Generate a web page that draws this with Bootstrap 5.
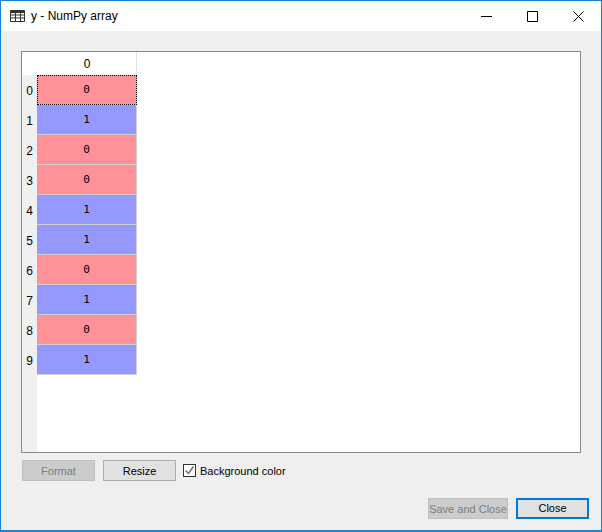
<!DOCTYPE html>
<html lang="en">
<head>
<meta charset="utf-8">
<title>y - NumPy array</title>
<link href="https://cdn.jsdelivr.net/npm/bootstrap@5.3.0/dist/css/bootstrap.min.css" rel="stylesheet">
<style>
html,body{height:100%;margin:0;}
body{font-family:"Liberation Sans",Arial,sans-serif;font-size:11px;color:#000;background:#f0f0f0;}
.win{width:602px;height:532px;border:1px solid #1883d7;border-bottom-width:2px;background:#efefef;}
.tbar{height:30px;background:#fff;padding-left:9px;font-size:12px;}
.tname{margin-left:5px;}
.tctl{width:46px;height:30px;}
.frame{margin:20px 20px 0 20px;height:402px;border:1px solid #85888f;background:#fff;}
.vhead{width:15px;background:#f0f0f0;font-size:12px;}
.vcell{height:30px;line-height:32px;text-align:center;}
.vgap{height:23px;background:#fff;}
.colm{width:100px;}
.hhead{height:23px;line-height:24px;text-align:center;border-right:1px solid #e3e3e3;padding-left:1px;font-size:12px;}
.dcell{height:30px;line-height:30px;text-align:center;font-family:"DejaVu Sans Mono",monospace;font-size:11px;border-right:1px solid #d0d0d0;border-bottom:1px solid #d0d0d0;}
.zero{background:#ff9198;}
.one{background:#9599ff;}
.cur{outline:1px dotted #000;outline-offset:-1px;}
.bar1{margin:7px 0 0 21px;height:21px;}
.gbtn{width:73px;height:21px;padding:0;line-height:18px;font-size:11px;border:1px solid #adadad;background:#e1e1e1;color:#000;border-radius:0;white-space:nowrap;}
.gbtn:disabled{background:#cccccc;color:#7d7d7d;border-color:#bfbfbf;opacity:1;}
.gap8{margin-left:8px;}
.ckwrap{margin-left:7px;}
.ckbox{width:13px;height:13px;border:1px solid #333;background:#fff;margin-right:4px;}
.cklabel{line-height:15px;padding-top:1px;}
.bar2{margin:17px 12px 0 0;height:21px;}
.wide{width:80px;}
.main{border:2px solid #0078d7;background:#e1e1e1;line-height:17px;}
</style>
</head>
<body>
<div class="win d-flex flex-column">
  <div class="tbar d-flex align-items-center">
    <svg width="16" height="13" viewBox="0 0 16 13" fill="none" stroke="#333" stroke-width="1">
      <path d="M.5 .5h14v11H.5z"/><path stroke-width="2" d="M0 2h15"/><path d="M.5 5h14M.5 8h14M5.5 3v8M10.5 3v8"/>
    </svg>
    <span class="tname flex-grow-1">y - NumPy array</span>
    <div class="tctl d-flex align-items-center justify-content-center"><svg width="11" height="11" viewBox="0 0 11 11" stroke="#000" fill="none"><path d="M0 5.5h11"/></svg></div>
    <div class="tctl d-flex align-items-center justify-content-center"><svg width="11" height="11" viewBox="0 0 11 11" stroke="#000" fill="none"><path d="M.5 .5h10v10H.5z"/></svg></div>
    <div class="tctl d-flex align-items-center justify-content-center"><svg width="11" height="11" viewBox="0 0 11 11" stroke="#000" fill="none"><path d="M.5 .5l10 10M10.5 .5l-10 10"/></svg></div>
  </div>
  <div class="frame d-flex">
    <div class="vhead">
      <div class="vgap"></div>
      <div class="vcell">0</div><div class="vcell">1</div><div class="vcell">2</div><div class="vcell">3</div><div class="vcell">4</div>
      <div class="vcell">5</div><div class="vcell">6</div><div class="vcell">7</div><div class="vcell">8</div><div class="vcell">9</div>
    </div>
    <div class="colm">
      <div class="hhead">0</div>
      <div class="dcell zero cur">0</div>
      <div class="dcell one">1</div>
      <div class="dcell zero">0</div>
      <div class="dcell zero">0</div>
      <div class="dcell one">1</div>
      <div class="dcell one">1</div>
      <div class="dcell zero">0</div>
      <div class="dcell one">1</div>
      <div class="dcell zero">0</div>
      <div class="dcell one">1</div>
    </div>
  </div>
  <div class="bar1 d-flex align-items-center">
    <button type="button" class="btn gbtn" disabled>Format</button>
    <button type="button" class="btn gbtn gap8">Resize</button>
    <div class="ckwrap d-flex align-items-center">
      <span class="ckbox d-flex align-items-center justify-content-center">
        <svg width="11" height="11" viewBox="0 0 11 11" fill="none" stroke="#666" stroke-width="1.3"><path d="M1.5 5.5l3 3 5-7"/></svg>
      </span>
      <span class="cklabel">Background color</span>
    </div>
  </div>
  <div class="bar2 d-flex justify-content-end">
    <button type="button" class="btn gbtn wide" disabled>Save and Close</button>
    <button type="button" class="btn gbtn gap8 main">Close</button>
  </div>
</div>
</body>
</html>
